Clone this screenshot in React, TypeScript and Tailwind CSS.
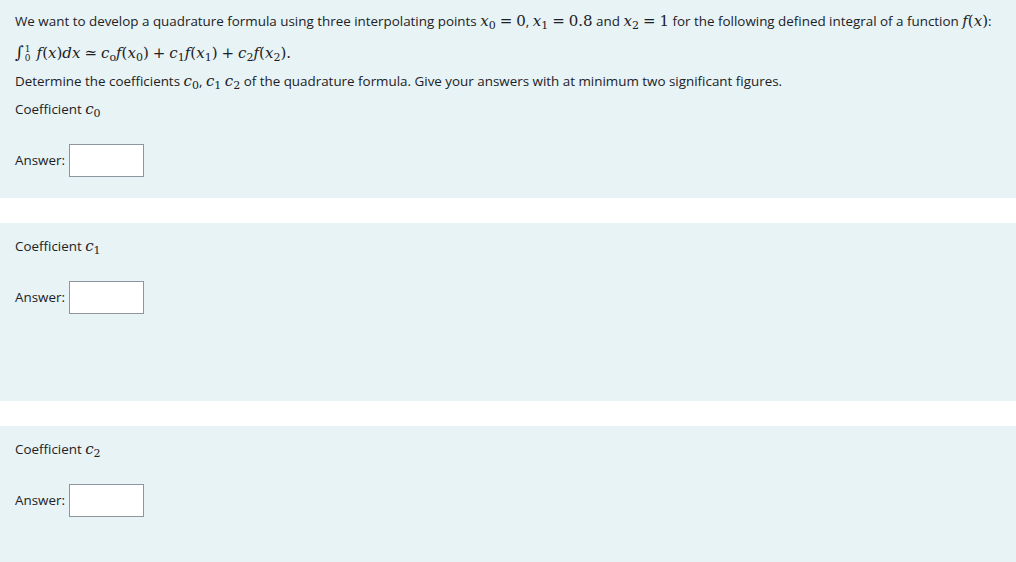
const sans = "font-['Segoe_UI','Open_Sans',sans-serif]"

function M({ children }: { children: React.ReactNode }) {
  return <span className="font-['DejaVu_Serif',serif] italic text-[15px] leading-none">{children}</span>
}

function R({ children }: { children: React.ReactNode }) {
  return <span className="font-['DejaVu_Serif',serif] not-italic text-[15px] leading-none">{children}</span>
}

function Op({ children }: { children: React.ReactNode }) {
  return <span className="font-['DejaVu_Serif',serif] not-italic text-[15px] leading-none mx-[4px]">{children}</span>
}

function Sub({ children }: { children: React.ReactNode }) {
  return (
    <span className="relative top-[3px] not-italic text-[11px] leading-none font-['DejaVu_Serif',serif]">
      {children}
    </span>
  )
}

function AnswerRow() {
  return (
    <div className="flex items-center gap-[4px]">
      <span>Answer:</span>
      <input
        type="text"
        className="w-[75px] h-[33px] bg-white border border-[#8f959e] outline-none"
      />
    </div>
  )
}

function Coef({ n }: { n: string }) {
  return (
    <p className="h-[20px] leading-[20px]">
      Coefficient{" "}
      <M>
        c<Sub>{n}</Sub>
      </M>
    </p>
  )
}

export default function App() {
  return (
    <div className={`${sans} text-[13.4px] text-[#1d2125] bg-white w-[1016px] h-[562px] overflow-hidden`}>
      <div className="bg-[#e7f3f5] px-[15px] pt-[11px] pb-[21px]">
        <p className="h-[20px] leading-[20px] mb-[10px] whitespace-nowrap">
          We want to develop a quadrature formula using three interpolating points{" "}
          <M>
            x<Sub>0</Sub>
          </M>
          <Op>=</Op>
          <R>0</R>, <M>x<Sub>1</Sub></M>
          <Op>=</Op>
          <R>0.8</R> and <M>x<Sub>2</Sub></M>
          <Op>=</Op>
          <R>1</R> for the following defined integral of a function <M>f</M>
          <R>(</R>
          <M>x</M>
          <R>)</R>:
        </p>
        <p className="h-[22px] leading-[22px] mb-[8px] whitespace-nowrap">
          <span className="font-['DejaVu_Serif',serif] text-[17px] italic">∫</span>
          <span className="inline-flex flex-col font-['DejaVu_Serif',serif] text-[9px] leading-[9px] align-middle mr-[6px] ml-[1px]">
            <span>1</span>
            <span>0</span>
          </span>
          <M>f</M>
          <R>(</R>
          <M>x</M>
          <R>)</R>
          <M>dx</M>
          <Op>≃</Op>
          <M>c<Sub>o</Sub>f</M>
          <R>(</R>
          <M>x<Sub>0</Sub></M>
          <R>)</R>
          <Op>+</Op>
          <M>c<Sub>1</Sub>f</M>
          <R>(</R>
          <M>x<Sub>1</Sub></M>
          <R>)</R>
          <Op>+</Op>
          <M>c<Sub>2</Sub>f</M>
          <R>(</R>
          <M>x<Sub>2</Sub></M>
          <R>).</R>
        </p>
        <p className="h-[20px] leading-[20px] mb-[8px] whitespace-nowrap">
          Determine the coefficients <M>c<Sub>0</Sub></M>, <M>c<Sub>1</Sub></M> <M>c<Sub>2</Sub></M> of the
          quadrature formula. Give your answers with at minimum two significant figures.
        </p>
        <Coef n="0" />
        <div className="mt-[25px]">
          <AnswerRow />
        </div>
      </div>

      <div className="h-[25px]" />

      <div className="bg-[#e7f3f5] px-[15px] pt-[13px] pb-[87px]">
        <Coef n="1" />
        <div className="mt-[25px]">
          <AnswerRow />
        </div>
      </div>

      <div className="h-[25px]" />

      <div className="bg-[#e7f3f5] px-[15px] pt-[13px] pb-[87px]">
        <Coef n="2" />
        <div className="mt-[25px]">
          <AnswerRow />
        </div>
      </div>
    </div>
  )
}
